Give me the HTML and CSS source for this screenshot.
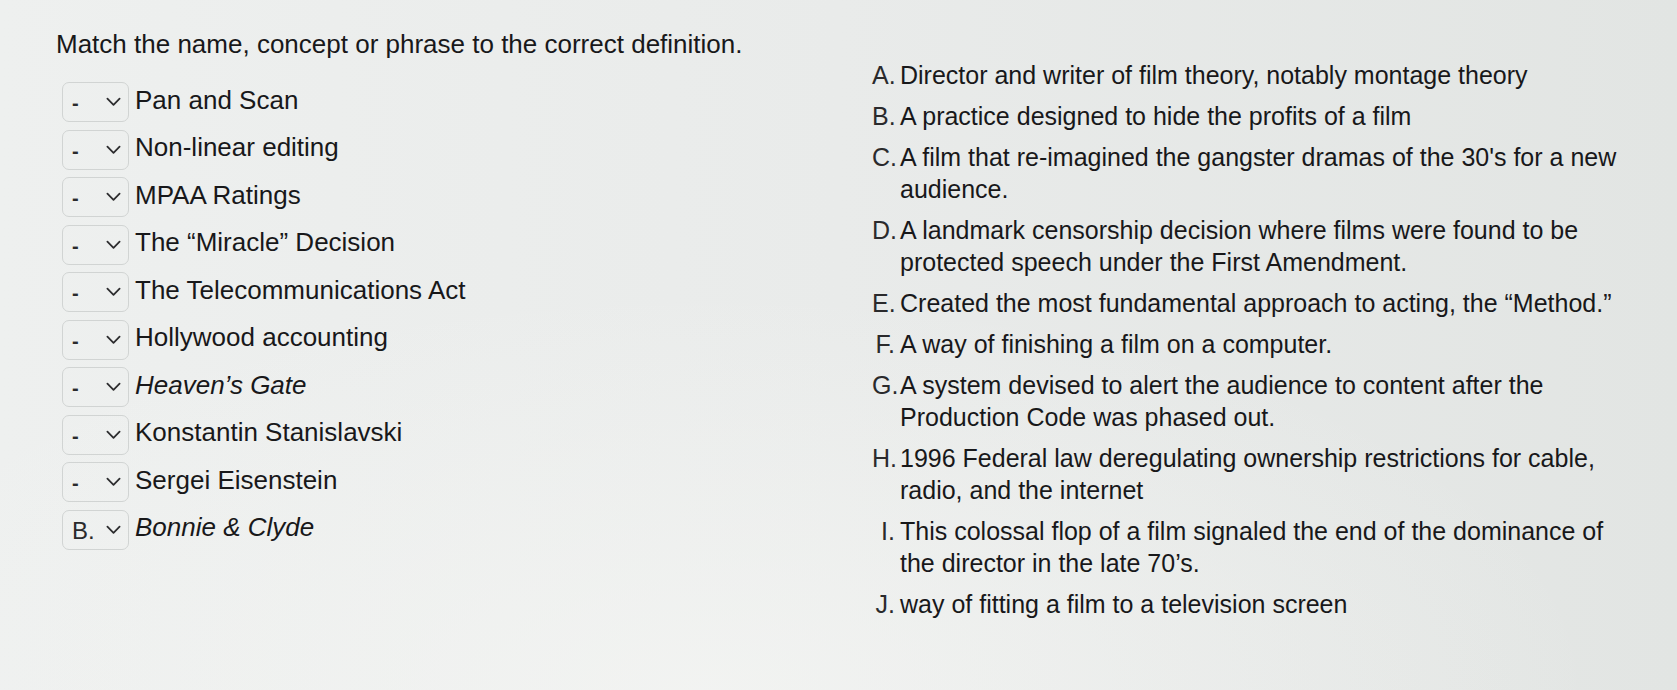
FILE: index.html
```html
<!DOCTYPE html>
<html lang="en">
<head>
<meta charset="utf-8">
<title>Match the name, concept or phrase</title>
<link rel="stylesheet" href="styles.css">
</head>
<body>
<main class="page">
  <section class="left">
    <h1 class="title">Match the name, concept or phrase to the correct definition.</h1>
    <ul class="matches">
      <li class="match"><span class="select"><span class="val">-</span><svg class="chev" viewBox="0 0 16 10"><path d="M1.5 1.5 L8 8 L14.5 1.5"/></svg></span><span class="term">Pan and Scan</span></li>
      <li class="match"><span class="select"><span class="val">-</span><svg class="chev" viewBox="0 0 16 10"><path d="M1.5 1.5 L8 8 L14.5 1.5"/></svg></span><span class="term">Non-linear editing</span></li>
      <li class="match"><span class="select"><span class="val">-</span><svg class="chev" viewBox="0 0 16 10"><path d="M1.5 1.5 L8 8 L14.5 1.5"/></svg></span><span class="term">MPAA Ratings</span></li>
      <li class="match"><span class="select"><span class="val">-</span><svg class="chev" viewBox="0 0 16 10"><path d="M1.5 1.5 L8 8 L14.5 1.5"/></svg></span><span class="term">The “Miracle” Decision</span></li>
      <li class="match"><span class="select"><span class="val">-</span><svg class="chev" viewBox="0 0 16 10"><path d="M1.5 1.5 L8 8 L14.5 1.5"/></svg></span><span class="term">The Telecommunications Act</span></li>
      <li class="match"><span class="select"><span class="val">-</span><svg class="chev" viewBox="0 0 16 10"><path d="M1.5 1.5 L8 8 L14.5 1.5"/></svg></span><span class="term">Hollywood accounting</span></li>
      <li class="match"><span class="select"><span class="val">-</span><svg class="chev" viewBox="0 0 16 10"><path d="M1.5 1.5 L8 8 L14.5 1.5"/></svg></span><span class="term italic">Heaven’s Gate</span></li>
      <li class="match"><span class="select"><span class="val">-</span><svg class="chev" viewBox="0 0 16 10"><path d="M1.5 1.5 L8 8 L14.5 1.5"/></svg></span><span class="term">Konstantin Stanislavski</span></li>
      <li class="match"><span class="select"><span class="val">-</span><svg class="chev" viewBox="0 0 16 10"><path d="M1.5 1.5 L8 8 L14.5 1.5"/></svg></span><span class="term">Sergei Eisenstein</span></li>
      <li class="match"><span class="select"><span class="val chosen">B.</span><svg class="chev" viewBox="0 0 16 10"><path d="M1.5 1.5 L8 8 L14.5 1.5"/></svg></span><span class="term italic">Bonnie &amp; Clyde</span></li>
    </ul>
  </section>
  <section class="right">
    <ol class="defs">
      <li class="def"><span class="letter">A.</span><span class="text">Director and writer of film theory, notably montage theory</span></li>
      <li class="def"><span class="letter">B.</span><span class="text">A practice designed to hide the profits of a film</span></li>
      <li class="def"><span class="letter">C.</span><span class="text">A film that re-imagined the gangster dramas of the 30's for a new audience.</span></li>
      <li class="def"><span class="letter">D.</span><span class="text">A landmark censorship decision where films were found to be protected speech under the First Amendment.</span></li>
      <li class="def"><span class="letter">E.</span><span class="text">Created the most fundamental approach to acting, the “Method.”</span></li>
      <li class="def"><span class="letter">F.</span><span class="text">A way of finishing a film on a computer.</span></li>
      <li class="def"><span class="letter">G.</span><span class="text">A system devised to alert the audience to content after the Production Code was phased out.</span></li>
      <li class="def"><span class="letter">H.</span><span class="text">1996 Federal law deregulating ownership restrictions for cable, radio, and the internet</span></li>
      <li class="def"><span class="letter">I.</span><span class="text">This colossal flop of a film signaled the end of the dominance of the director in the late 70’s.</span></li>
      <li class="def"><span class="letter">J.</span><span class="text">way of fitting a film to a television screen</span></li>
    </ol>
  </section>
</main>
</body>
</html>
```

FILE: styles.css
```css
* { box-sizing: border-box; }
html, body { margin: 0; padding: 0; }
body {
  width: 1677px;
  height: 690px;
  overflow: hidden;
  background:
    radial-gradient(ellipse 900px 400px at 700px 690px, rgba(245, 246, 244, 0.7), rgba(245, 246, 244, 0) 100%),
    linear-gradient(90deg, #eef0ef 0%, #e9ebea 50%, #e2e5e3 100%);
  color: #18181a;
  font-family: "Liberation Sans", Arial, Helvetica, sans-serif;
}
.page {
  display: flex;
  padding: 29px 0 0 56px;
}
.left {
  width: 816px;
  flex: none;
}
.title {
  margin: 0;
  font-size: 26px;
  font-weight: normal;
  line-height: 30px;
}
.matches {
  list-style: none;
  margin: 23px 0 0 6px;
  padding: 0;
  display: flex;
  flex-direction: column;
  gap: 7.5px;
}
.match {
  display: flex;
  align-items: center;
  gap: 6px;
  height: 40px;
}
.select {
  width: 67px;
  height: 40px;
  border: 1px solid #d1d4d3;
  border-radius: 7px;
  display: flex;
  align-items: center;
  justify-content: space-between;
  padding: 0 7px 0 9px;
  flex: none;
}
.val {
  font-size: 20px;
  font-weight: bold;
  color: #2a2a2c;
  padding-top: 3px;
}
.val.chosen { font-size: 24px; font-weight: normal; padding-top: 2px; }
.chev {
  width: 15px;
  height: 10px;
  fill: none;
  stroke: #2c2c2e;
  stroke-width: 1.9;
  stroke-linecap: round;
  stroke-linejoin: round;
}
.term {
  font-size: 26px;
  line-height: 30px;
  padding-bottom: 5px;
}
.italic { font-style: italic; }
.right {
  padding-top: 30px;
}
.defs {
  list-style: none;
  margin: 0;
  padding: 0;
  width: 760px;
  display: flex;
  flex-direction: column;
  gap: 9px;
}
.def {
  display: grid;
  grid-template-columns: 28px 1fr;
  font-size: 25px;
  line-height: 32px;
}
.letter {
  color: #2a2a2c;
  text-align: right;
  padding-right: 5px;
}
```
